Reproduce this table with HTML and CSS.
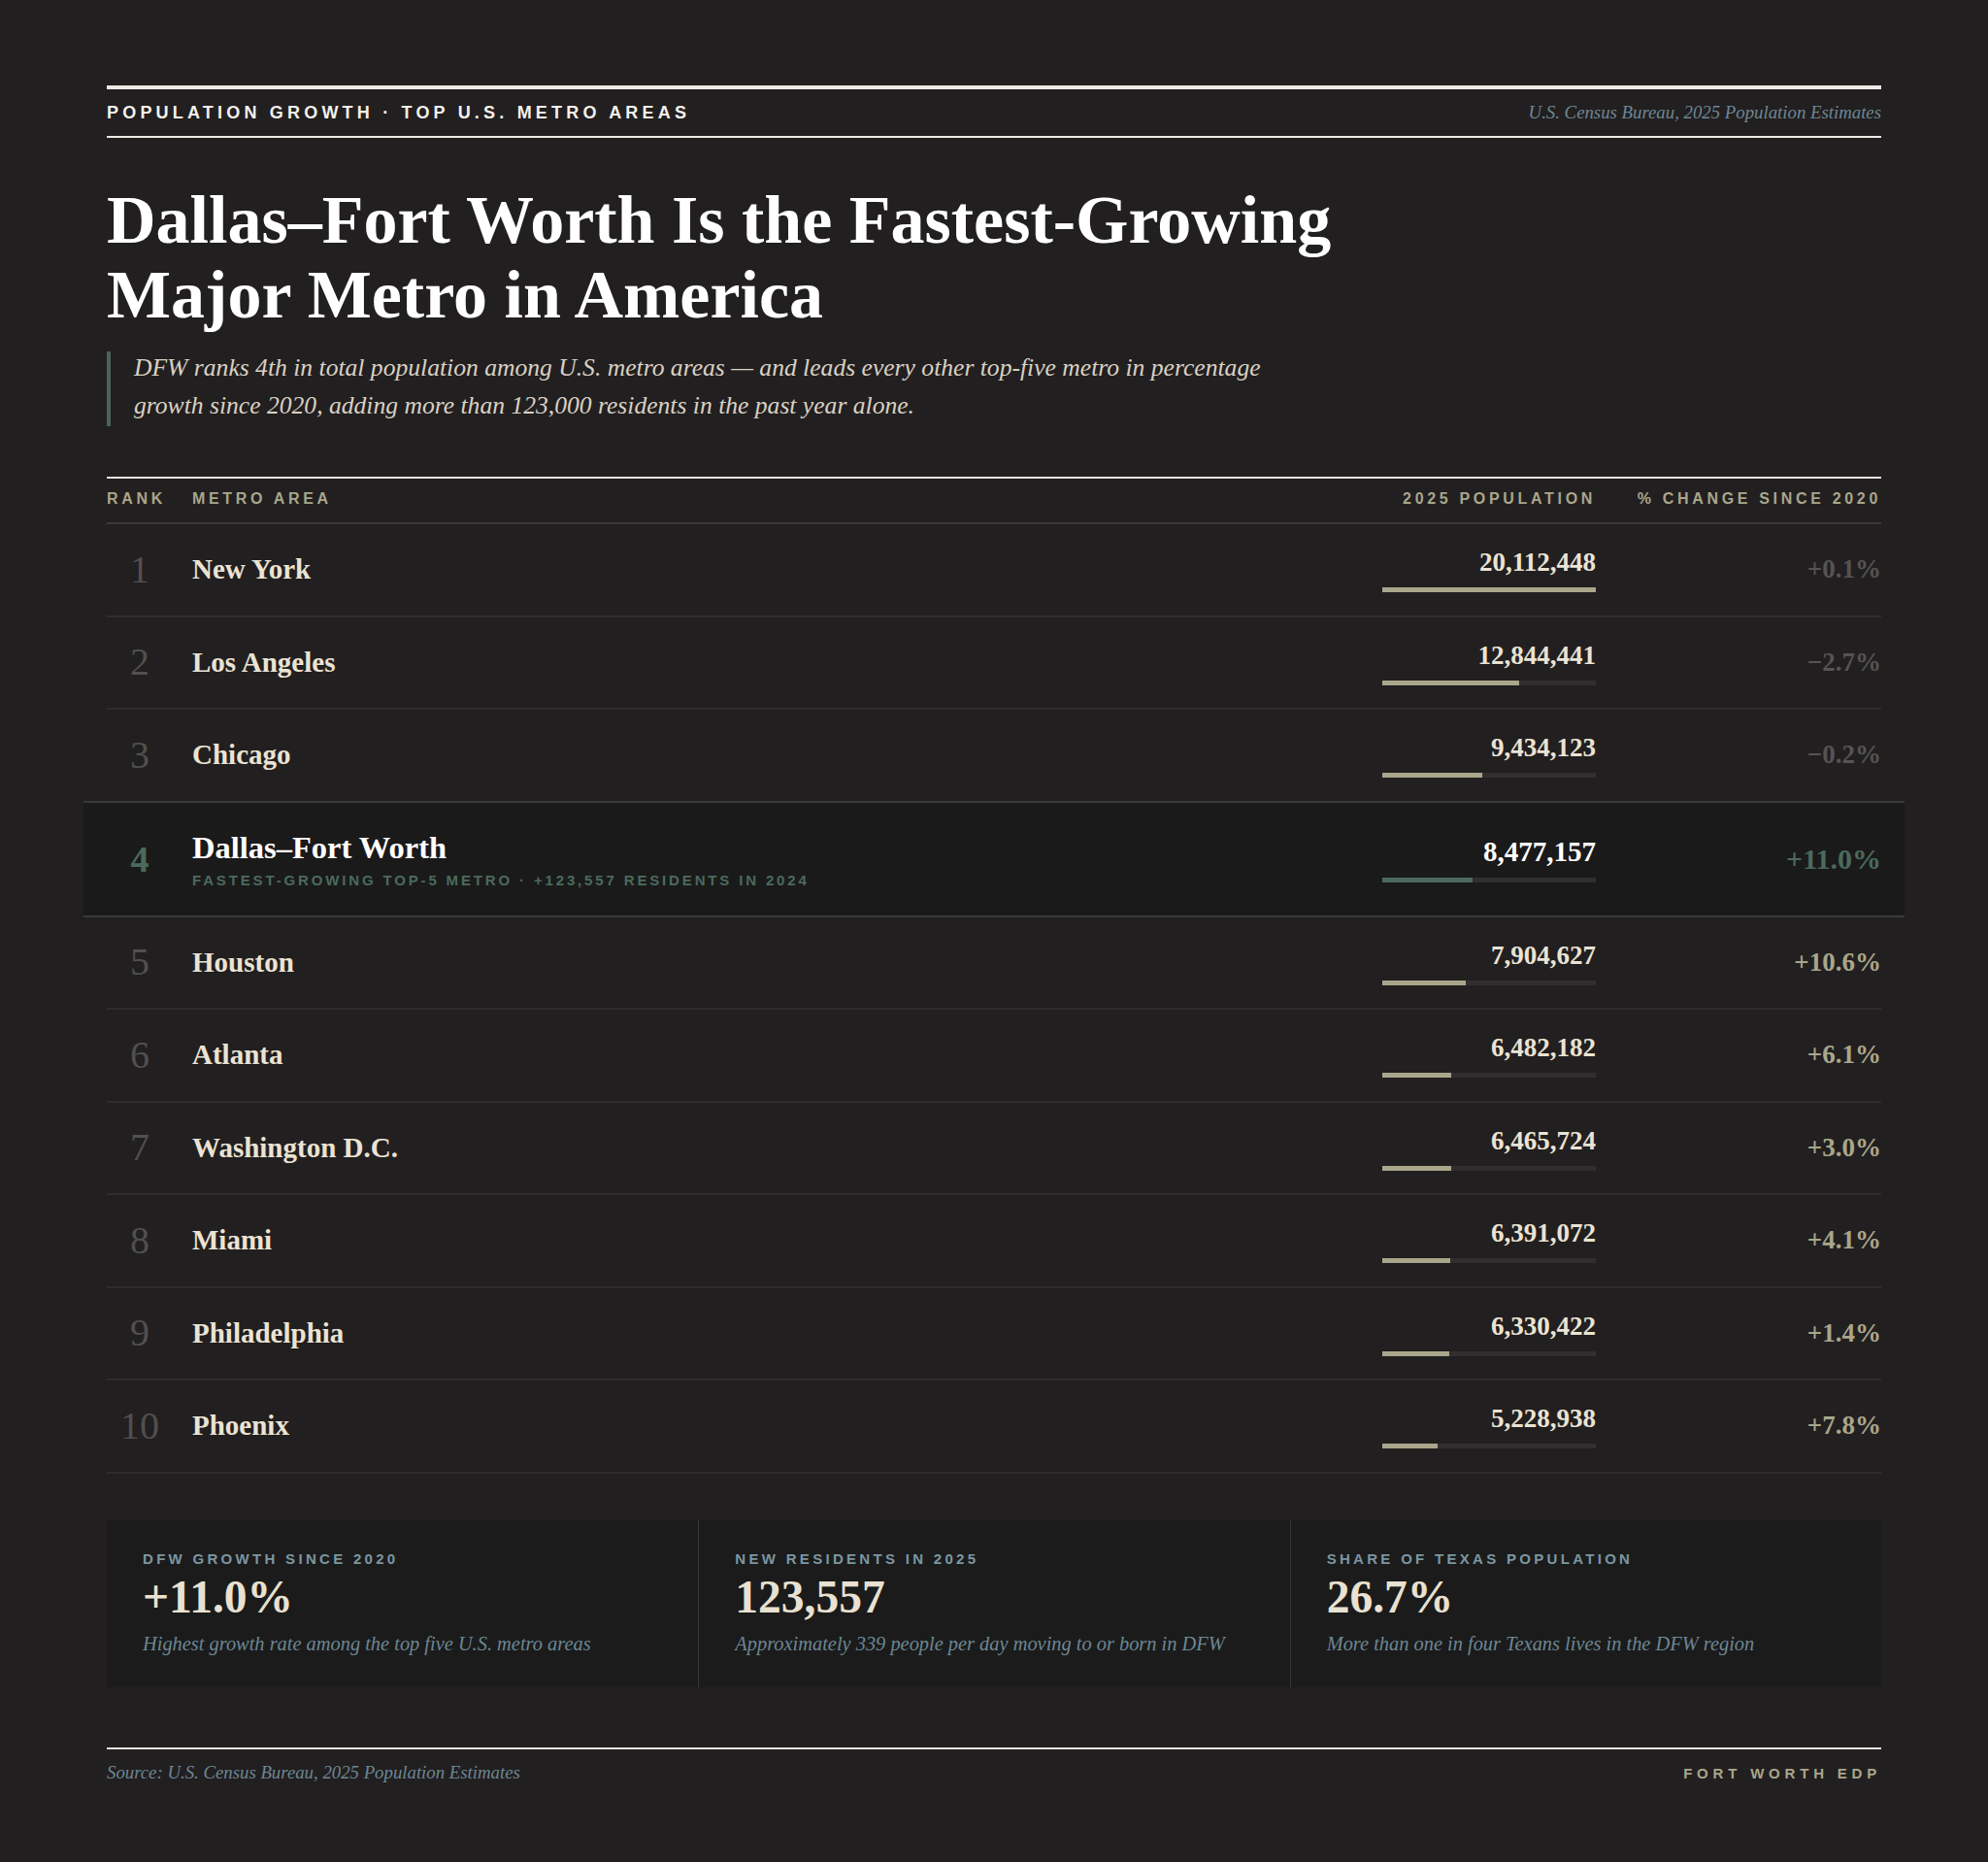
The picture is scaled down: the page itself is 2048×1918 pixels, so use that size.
FILE: index.html
```html
<!DOCTYPE html>
<html lang="en">
<head>
<meta charset="utf-8">
<title>Population Growth · Top U.S. Metro Areas</title>
<link rel="stylesheet" href="styles.css">
</head>
<body>
<main class="page">
  <header class="topbar">
    <span class="kicker">POPULATION GROWTH · TOP U.S. METRO AREAS</span>
    <span class="source-top">U.S. Census Bureau, 2025 Population Estimates</span>
  </header>

  <h1 class="title">Dallas–Fort Worth Is the Fastest-Growing Major Metro in America</h1>
  <p class="dek">DFW ranks 4th in total population among U.S. metro areas — and leads every other top-five metro in percentage growth since 2020, adding more than 123,000 residents in the past year alone.</p>

  <section class="table">
    <div class="thead">
      <span class="th">RANK</span>
      <span class="th">METRO AREA</span>
      <span class="th r">2025 POPULATION</span>
      <span class="th r">% CHANGE SINCE 2020</span>
    </div>

    <div class="row">
      <span class="rank">1</span>
      <div class="metro"><span class="name">New York</span></div>
      <div class="pop"><span class="num">20,112,448</span><div class="bar"><div class="fill" style="width:100%"></div></div></div>
      <span class="chg muted">+0.1%</span>
    </div>
    <div class="row">
      <span class="rank">2</span>
      <div class="metro"><span class="name">Los Angeles</span></div>
      <div class="pop"><span class="num">12,844,441</span><div class="bar"><div class="fill" style="width:63.9%"></div></div></div>
      <span class="chg muted">−2.7%</span>
    </div>
    <div class="row">
      <span class="rank">3</span>
      <div class="metro"><span class="name">Chicago</span></div>
      <div class="pop"><span class="num">9,434,123</span><div class="bar"><div class="fill" style="width:46.9%"></div></div></div>
      <span class="chg muted">−0.2%</span>
    </div>
    <div class="row hl">
      <span class="rank">4</span>
      <div class="metro"><span class="name">Dallas–Fort Worth</span><span class="sub">FASTEST-GROWING TOP-5 METRO · +123,557 RESIDENTS IN 2024</span></div>
      <div class="pop"><span class="num">8,477,157</span><div class="bar"><div class="fill" style="width:42.1%"></div></div></div>
      <span class="chg">+11.0%</span>
    </div>
    <div class="row">
      <span class="rank">5</span>
      <div class="metro"><span class="name">Houston</span></div>
      <div class="pop"><span class="num">7,904,627</span><div class="bar"><div class="fill" style="width:39.3%"></div></div></div>
      <span class="chg">+10.6%</span>
    </div>
    <div class="row">
      <span class="rank">6</span>
      <div class="metro"><span class="name">Atlanta</span></div>
      <div class="pop"><span class="num">6,482,182</span><div class="bar"><div class="fill" style="width:32.2%"></div></div></div>
      <span class="chg">+6.1%</span>
    </div>
    <div class="row">
      <span class="rank">7</span>
      <div class="metro"><span class="name">Washington D.C.</span></div>
      <div class="pop"><span class="num">6,465,724</span><div class="bar"><div class="fill" style="width:32.1%"></div></div></div>
      <span class="chg">+3.0%</span>
    </div>
    <div class="row">
      <span class="rank">8</span>
      <div class="metro"><span class="name">Miami</span></div>
      <div class="pop"><span class="num">6,391,072</span><div class="bar"><div class="fill" style="width:31.8%"></div></div></div>
      <span class="chg">+4.1%</span>
    </div>
    <div class="row">
      <span class="rank">9</span>
      <div class="metro"><span class="name">Philadelphia</span></div>
      <div class="pop"><span class="num">6,330,422</span><div class="bar"><div class="fill" style="width:31.5%"></div></div></div>
      <span class="chg">+1.4%</span>
    </div>
    <div class="row">
      <span class="rank">10</span>
      <div class="metro"><span class="name">Phoenix</span></div>
      <div class="pop"><span class="num">5,228,938</span><div class="bar"><div class="fill" style="width:26%"></div></div></div>
      <span class="chg">+7.8%</span>
    </div>
  </section>

  <section class="stats">
    <div class="stat">
      <div class="stat-label">DFW GROWTH SINCE 2020</div>
      <div class="stat-value">+11.0%</div>
      <div class="stat-desc">Highest growth rate among the top five U.S. metro areas</div>
    </div>
    <div class="stat">
      <div class="stat-label">NEW RESIDENTS IN 2025</div>
      <div class="stat-value">123,557</div>
      <div class="stat-desc">Approximately 339 people per day moving to or born in DFW</div>
    </div>
    <div class="stat">
      <div class="stat-label">SHARE OF TEXAS POPULATION</div>
      <div class="stat-value">26.7%</div>
      <div class="stat-desc">More than one in four Texans lives in the DFW region</div>
    </div>
  </section>

  <footer class="footer">
    <span class="footer-src">Source: U.S. Census Bureau, 2025 Population Estimates</span>
    <span class="footer-brand">FORT WORTH EDP</span>
  </footer>
</main>
</body>
</html>
```

FILE: styles.css
```css
* {
  box-sizing: border-box;
  margin: 0;
  padding: 0;
}

html,
body {
  background: #221f20;
}

body {
  font-family: "Liberation Serif", "Times New Roman", serif;
  color: #ebe3d3;
}

.page {
  padding: 88px 110px 80px;
}

/* top bar */
.topbar {
  display: flex;
  justify-content: space-between;
  align-items: center;
  height: 54px;
  border-top: 4px solid #ece9e4;
  border-bottom: 2px solid #ece9e4;
}

.kicker {
  font-family: "Liberation Sans", Arial, sans-serif;
  font-weight: 700;
  font-size: 18px;
  letter-spacing: 0.233em;
  color: #f4f1eb;
}

.source-top {
  font-style: italic;
  font-size: 18.8px;
  color: #6e8794;
}

/* headline */
.title {
  margin-top: 46px;
  max-width: 1400px;
  font-size: 70px;
  line-height: 77px;
  font-weight: 700;
  color: #ffffff;
}

.dek {
  margin-top: 17px;
  max-width: 1208px;
  padding: 0 0 2px 28px;
  background-image: linear-gradient(#4b6357, #4b6357);
  background-repeat: no-repeat;
  background-size: 4px calc(100% - 3px);
  background-position: left bottom;
  font-style: italic;
  font-size: 25.6px;
  line-height: 39px;
  color: #d9d1c3;
}

/* table */
.table {
  margin-top: 52px;
  border-top: 2px solid #e6e3de;
}

.thead,
.row {
  display: grid;
  grid-template-columns: 68px 1fr 220px 274px;
  column-gap: 20px;
  align-items: center;
}

.thead {
  height: 47px;
  padding-bottom: 3px;
  border-bottom: 2px solid #3b393a;
}

.th {
  font-family: "Liberation Sans", Arial, sans-serif;
  font-weight: 700;
  font-size: 16px;
  letter-spacing: 0.23em;
  color: #a9a68b;
}

.th.r {
  text-align: right;
}

.row {
  height: 95.5px;
  border-bottom: 2px solid #2f2c2d;
}

.rank {
  text-align: center;
  font-size: 40px;
  line-height: 1;
  color: #514f4f;
}

.metro {
  display: flex;
  flex-direction: column;
}

.name {
  font-weight: 700;
  font-size: 29px;
  line-height: 1.2;
  color: #ebe3d3;
}

.pop {
  display: flex;
  flex-direction: column;
  align-items: flex-end;
}

.num {
  font-weight: 700;
  font-size: 27px;
  line-height: 1.2;
  color: #ebe3d3;
}

.bar {
  width: 100%;
  height: 5px;
  margin-top: 10px;
  background: #302e2e;
}

.fill {
  height: 100%;
  background: #a9a68b;
}

.chg {
  text-align: right;
  font-weight: 700;
  font-size: 27px;
  color: #a9a68b;
}

.chg.muted {
  color: #555353;
}

/* highlighted DFW row */
.row.hl {
  height: 120px;
  margin: -2px -24px 0;
  padding: 0 24px;
  background: #1a1a1a;
  border-top: 2px solid #3a3939;
  border-bottom: 2px solid #3a3939;
}

.hl .rank {
  font-size: 38px;
  font-weight: 700;
  color: #4b6a5d;
}

.hl .name {
  font-size: 32.5px;
  color: #ffffff;
}

.sub {
  margin-top: 5px;
  font-family: "Liberation Sans", Arial, sans-serif;
  font-weight: 700;
  font-size: 15px;
  line-height: 18px;
  letter-spacing: 0.19em;
  color: #4b6a5d;
}

.hl .num {
  font-size: 29px;
  color: #ffffff;
}

.hl .fill {
  background: #4b6a5d;
}

.hl .chg {
  font-size: 30px;
  color: #4b6a5d;
}

/* stats */
.stats {
  margin-top: 48px;
  display: grid;
  grid-template-columns: repeat(3, 1fr);
  background: #1b1b1b;
}

.stat {
  padding: 31px 37px 31px;
}

.stat + .stat {
  border-left: 1px solid #363535;
}

.stat-label {
  font-family: "Liberation Sans", Arial, sans-serif;
  font-weight: 700;
  font-size: 15px;
  line-height: 18px;
  letter-spacing: 0.22em;
  color: #7c96a1;
}

.stat-value {
  margin-top: 5px;
  font-weight: 700;
  font-size: 47.5px;
  line-height: 1.08;
  color: #e9e1d1;
}

.stat-desc {
  margin-top: 8px;
  font-style: italic;
  font-size: 20.4px;
  line-height: 28px;
  color: #6c8794;
}

/* footer */
.footer {
  margin-top: 62px;
  padding-top: 13px;
  border-top: 2px solid #e6e3de;
  display: flex;
  justify-content: space-between;
  align-items: baseline;
}

.footer-src {
  font-style: italic;
  font-size: 18.8px;
  color: #6c8794;
}

.footer-brand {
  font-family: "Liberation Sans", Arial, sans-serif;
  font-weight: 700;
  font-size: 15px;
  letter-spacing: 0.32em;
  color: #a9a68b;
}
```
